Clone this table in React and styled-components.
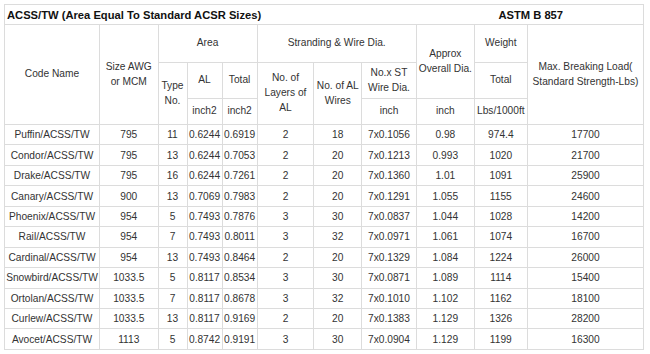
import React from "react";
import styled, { createGlobalStyle } from "styled-components";

const GlobalStyle = createGlobalStyle`
  html, body { margin: 0; padding: 0; background: #fff; }
  body { font-family: "Liberation Sans", Arial, sans-serif; }
`;

const Page = styled.div`
  padding: 4px 0 0 4px;
`;

const Table = styled.table`
  border-collapse: collapse;
  table-layout: fixed;
  width: 640px;
  color: #333;
  font-size: 10.2px;
`;

const TitleCell = styled.td`
  height: 19px;
  padding: 0 0 0 2px;
  border: 1px solid #dcdcdc;
  ${(p) => (p.$right ? "border-left: none;" : "border-right: none;")}
  text-align: ${(p) => (p.$right ? "center" : "left")};
  font-weight: bold;
  font-size: 11.2px;
  color: #111;
  vertical-align: middle;
`;

const HeadCell = styled.td`
  border: 1px solid #dcdcdc;
  padding: 0;
  text-align: center;
  vertical-align: middle;
  line-height: 14.7px;
  height: ${(p) => p.$h || "auto"};
`;

const Cell = styled.td`
  border: 1px solid #dcdcdc;
  padding: 0;
  height: 19.45px;
  text-align: center;
  vertical-align: middle;
  white-space: nowrap;
`;

const widths = [95, 58.5, 29, 35, 35.2, 56.6, 48, 54.4, 58.3, 52.7, 116.6];

const rows = [
  ["Puffin/ACSS/TW", "795", "11", "0.6244", "0.6919", "2", "18", "7x0.1056", "0.98", "974.4", "17700"],
  ["Condor/ACSS/TW", "795", "13", "0.6244", "0.7053", "2", "20", "7x0.1213", "0.993", "1020", "21700"],
  ["Drake/ACSS/TW", "795", "16", "0.6244", "0.7261", "2", "20", "7x0.1360", "1.01", "1091", "25900"],
  ["Canary/ACSS/TW", "900", "13", "0.7069", "0.7983", "2", "20", "7x0.1291", "1.055", "1155", "24600"],
  ["Phoenix/ACSS/TW", "954", "5", "0.7493", "0.7876", "3", "30", "7x0.0837", "1.044", "1028", "14200"],
  ["Rail/ACSS/TW", "954", "7", "0.7493", "0.8011", "3", "32", "7x0.0971", "1.061", "1074", "16700"],
  ["Cardinal/ACSS/TW", "954", "13", "0.7493", "0.8464", "2", "20", "7x0.1329", "1.084", "1224", "26000"],
  ["Snowbird/ACSS/TW", "1033.5", "5", "0.8117", "0.8534", "3", "30", "7x0.0871", "1.089", "1114", "15400"],
  ["Ortolan/ACSS/TW", "1033.5", "7", "0.8117", "0.8678", "3", "32", "7x0.1010", "1.102", "1162", "18100"],
  ["Curlew/ACSS/TW", "1033.5", "13", "0.8117", "0.9169", "2", "20", "7x0.1383", "1.129", "1326", "28200"],
  ["Avocet/ACSS/TW", "1113", "5", "0.8742", "0.9191", "3", "30", "7x0.0904", "1.129", "1199", "16300"],
];

export default function App() {
  return (
    <>
      <GlobalStyle />
      <Page>
        <Table>
          <colgroup>
            {widths.map((w, i) => (
              <col key={i} style={{ width: `${w}px` }} />
            ))}
          </colgroup>
          <thead>
            <tr>
              <TitleCell colSpan={8}>ACSS/TW (Area Equal To Standard ACSR Sizes)</TitleCell>
              <TitleCell colSpan={3} $right>ASTM B 857</TitleCell>
            </tr>
            <tr>
              <HeadCell rowSpan={3}>Code Name</HeadCell>
              <HeadCell rowSpan={3}>Size AWG<br />or MCM</HeadCell>
              <HeadCell colSpan={3} $h="37px">Area</HeadCell>
              <HeadCell colSpan={3}>Stranding &amp; Wire Dia.</HeadCell>
              <HeadCell rowSpan={2}>Approx<br />Overall Dia.</HeadCell>
              <HeadCell>Weight</HeadCell>
              <HeadCell rowSpan={3}>Max. Breaking Load(<br />Standard Strength-Lbs)</HeadCell>
            </tr>
            <tr>
              <HeadCell rowSpan={2}>Type<br />No.</HeadCell>
              <HeadCell $h="35px">AL</HeadCell>
              <HeadCell>Total</HeadCell>
              <HeadCell rowSpan={2}>No. of<br />Layers of<br />AL</HeadCell>
              <HeadCell rowSpan={2}>No. of AL<br />Wires</HeadCell>
              <HeadCell>No.x ST<br />Wire Dia.</HeadCell>
              <HeadCell>Total</HeadCell>
            </tr>
            <tr>
              <HeadCell $h="25px">inch2</HeadCell>
              <HeadCell>inch2</HeadCell>
              <HeadCell>inch</HeadCell>
              <HeadCell>inch</HeadCell>
              <HeadCell>Lbs/1000ft</HeadCell>
            </tr>
          </thead>
          <tbody>
            {rows.map((r, i) => (
              <tr key={i}>
                {r.map((v, j) => (
                  <Cell key={j}>{v}</Cell>
                ))}
              </tr>
            ))}
          </tbody>
        </Table>
      </Page>
    </>
  );
}
